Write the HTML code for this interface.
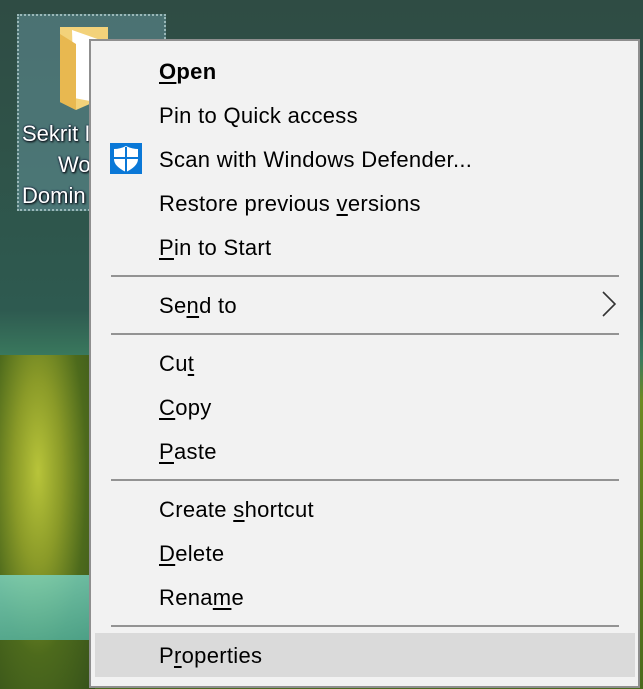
<!DOCTYPE html>
<html><head><meta charset="utf-8"><style>
*{margin:0;padding:0;box-sizing:border-box}
body{width:643px;height:689px;overflow:hidden;position:relative;font-family:"Liberation Sans",sans-serif;
background:linear-gradient(180deg,#2f4c44 0%,#2f5248 20%,#2e5a50 45%,#3a7a5e 52%,#6d8a22 58%,#4a6a1c 100%);}
.bg2{position:absolute;left:0;top:355px;width:95px;height:334px;
background:radial-gradient(ellipse at 40% 35%,#b8c43a 0,#8a9a28 30%,#4d6a1c 60%,#34501a 100%);}
.bg3{position:absolute;left:0;top:575px;width:95px;height:65px;background:linear-gradient(170deg,#7ed8c8,#4fb0a0);opacity:.8}
.sel{position:absolute;left:17px;top:14px;width:149px;height:197px;background:rgba(110,160,170,.45);border:2px dotted #9ab8b8}
.lbl{position:absolute;color:#fff;font-size:22px;text-shadow:1px 1px 2px #000,0 0 2px #003}
.menu{position:absolute;left:89px;top:39px;width:551px;height:649px;background:#f2f2f2;border:2px solid #8f8f8f}
.it{position:absolute;left:68px;font-size:22px;letter-spacing:0.3px;color:#000;height:44px;line-height:42px;white-space:nowrap}
.sep{position:absolute;left:20px;width:508px;height:2px;background:#939393}
u{text-decoration:underline;text-underline-offset:3px}
.hl{position:absolute;left:4px;top:592px;width:540px;height:44px;background:#dadada}
</style></head><body>
<div class="bg2"></div><div class="bg3"></div>
<div class="sel"></div>
<svg style="position:absolute;left:58px;top:26px" width="50" height="84" viewBox="0 0 50 84">
<path d="M2 1 H50 V70 L18 84 L2 76 Z" fill="#f3d27a"/>
<path d="M14 4 L48 16 V78 L16 72 Z" fill="#fff"/>
<path d="M2 8 L18 18 V84 L2 76 Z" fill="#e8b850"/>
</svg>
<div class="lbl" style="left:22px;top:121px">Sekrit I</div>
<div class="lbl" style="left:58px;top:152px">Wo</div>
<div class="lbl" style="left:22px;top:183px">Domin</div>
<div class="menu">
<div class="hl"></div>
<div class="it" style="top:10px;font-weight:bold"><u>O</u>pen</div>
<div class="it" style="top:54px">Pin to Quick access</div>
<svg style="position:absolute;left:19px;top:102px" width="32" height="31" viewBox="0 0 32 31">
<rect width="32" height="31" fill="#0a78d7"/>
<path d="M16 3 C12 5 8 6 4 6 V16 C4 22 10 26 16 29 C22 26 28 22 28 16 V6 C24 6 20 5 16 3Z" fill="#fff"/>
<rect x="15" y="4" width="2" height="25" fill="#0a78d7"/><rect x="4" y="14" width="24" height="2" fill="#0a78d7"/>
</svg>
<div class="it" style="top:98px">Scan with Windows Defender...</div>
<div class="it" style="top:142px">Restore previous <u>v</u>ersions</div>
<div class="it" style="top:186px"><u>P</u>in to Start</div>
<div class="sep" style="top:234px"></div>
<div class="it" style="top:244px">Se<u>n</u>d to</div>
<svg style="position:absolute;left:511px;top:250px" width="14" height="28" viewBox="0 0 14 28"><path d="M1 1 L13 13 L1 25" fill="none" stroke="#333" stroke-width="1.6"/></svg>
<div class="sep" style="top:292px"></div>
<div class="it" style="top:302px">Cu<u>t</u></div>
<div class="it" style="top:346px"><u>C</u>opy</div>
<div class="it" style="top:390px"><u>P</u>aste</div>
<div class="sep" style="top:438px"></div>
<div class="it" style="top:448px">Create <u>s</u>hortcut</div>
<div class="it" style="top:492px"><u>D</u>elete</div>
<div class="it" style="top:536px">Rena<u>m</u>e</div>
<div class="sep" style="top:584px"></div>
<div class="it" style="top:594px">P<u>r</u>operties</div>
</div>
</body></html>
